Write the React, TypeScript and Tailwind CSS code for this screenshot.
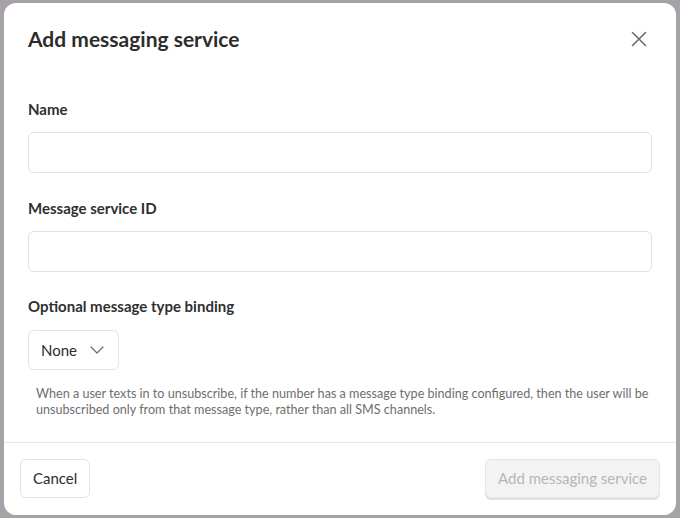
import React from "react";

function CloseIcon() {
  return (
    <svg width="16" height="16" viewBox="0 0 16 16" fill="none" className="text-[#6b6b6b]">
      <path d="M1.5 1.5l13 13M14.5 1.5l-13 13" stroke="currentColor" strokeWidth="1.6" strokeLinecap="round" />
    </svg>
  );
}

function ChevronDown() {
  return (
    <svg width="14" height="8" viewBox="0 0 14 8" fill="none" className="text-[#6b6b6b]">
      <path d="M1 1l6 6 6-6" stroke="currentColor" strokeWidth="1.2" strokeLinecap="round" strokeLinejoin="round" />
    </svg>
  );
}

function Field({ label, className }: { label: string; className?: string }) {
  return (
    <div className={className}>
      <label className="block text-[15px] leading-5 font-bold text-[#2f2f2f]">{label}</label>
      <input
        type="text"
        className="mt-[13px] block h-[41px] w-full rounded-[6px] border border-[#e2e2e2] bg-white px-3 text-[14px] outline-none"
      />
    </div>
  );
}

export default function App() {
  return (
    <div
      className="min-h-[518px] bg-[#a7a2a9] px-[4px] pt-[3px]"
      style={{ fontFamily: "Lato, 'Noto Sans', sans-serif" }}
    >
      <div className="flex h-[512px] w-[672px] flex-col rounded-[12px] bg-white">
        {/* Header */}
        <div className="flex items-start justify-between pl-6 pr-[29px] pt-[22px]">
          <h2 className="text-[21px] leading-7 font-bold text-[#2d2d2d]">Add messaging service</h2>
          <button className="mt-[6px] flex h-4 w-4 items-center justify-center">
            <CloseIcon />
          </button>
        </div>

        {/* Body */}
        <div className="flex-1 px-6 pt-[46px]">
          <Field label="Name" />
          <Field label="Message service ID" className="mt-[25px]" />

          <div className="mt-[24px]">
            <label className="block text-[15px] leading-5 font-bold text-[#2f2f2f]">
              Optional message type binding
            </label>
            <button className="mt-[14px] flex h-[40px] w-[91px] items-center justify-between rounded-[6px] border border-[#e2e2e2] bg-white pl-[12px] pr-[14px] text-[15px] text-[#2d2d2d]">
              <span>None</span>
              <ChevronDown />
            </button>
            <p className="mr-[-4px] mt-[16px] pl-2 text-[12.6px] leading-[16px] text-[#6e6e6e]">
              When a user texts in to unsubscribe, if the number has a message type binding configured, then the user will be
              unsubscribed only from that message type, rather than all SMS channels.
            </p>
          </div>
        </div>

        {/* Footer */}
        <div className="flex items-center justify-between border-t border-[#e6e6e6] px-4 pb-[17px] pt-4">
          <button className="h-[39px] rounded-[6px] border border-[#e2e2e2] bg-white px-3 text-[15px] text-[#2d2d2d]">
            Cancel
          </button>
          <button
            disabled
            className="h-[39px] rounded-[6px] border border-[#e6e6e6] bg-[#f3f3f3] px-3 text-[15px] text-[#b6b6ba] shadow-[0_2px_0_#e0e0e0]"
          >
            Add messaging service
          </button>
        </div>
      </div>
    </div>
  );
}
